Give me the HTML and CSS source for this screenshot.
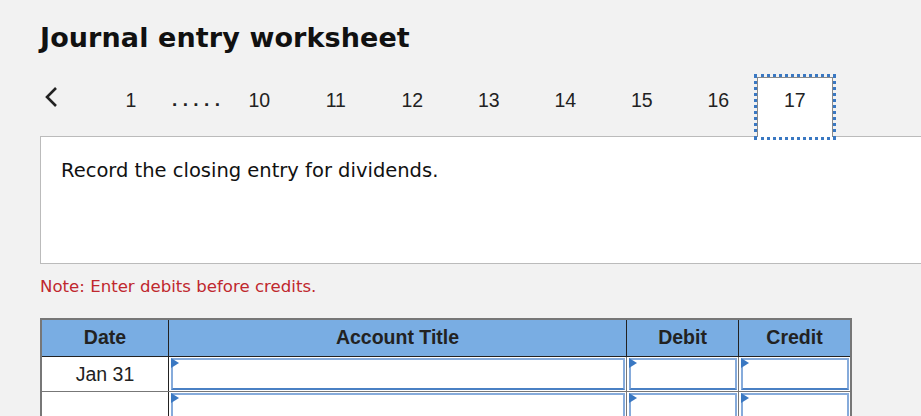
FILE: index.html
```html
<!DOCTYPE html>
<html>
<head>
<meta charset="utf-8">
<link rel="stylesheet" href="styles.css">
</head>
<body>
<div class="page">
  <h1 class="title">Journal entry worksheet</h1>
  <nav class="pager">
    <span class="prev"><svg width="14" height="22" viewBox="0 0 14 22"><polyline points="12,1 3,10 12,19" fill="none" stroke="#222" stroke-width="2.6"/></svg></span>
    <span class="pg first">1</span>
    <span class="pg dots">.....</span>
    <span class="pg">10</span>
    <span class="pg">11</span>
    <span class="pg">12</span>
    <span class="pg">13</span>
    <span class="pg">14</span>
    <span class="pg">15</span>
    <span class="pg">16</span>
    <span class="pg active">17</span>
  </nav>
  <div class="panel">
    <p class="prompt">Record the closing entry for dividends.</p>
  </div>
  <p class="note">Note: Enter debits before credits.</p>
  <table class="journal">
    <thead>
      <tr>
        <th class="c-date">Date</th>
        <th class="c-acct">Account Title</th>
        <th class="c-num">Debit</th>
        <th class="c-num2">Credit</th>
      </tr>
    </thead>
    <tbody>
      <tr>
        <td class="date">Jan 31</td>
        <td class="inp"><div class="field"></div></td>
        <td class="inp"><div class="field"></div></td>
        <td class="inp"><div class="field"></div></td>
      </tr>
      <tr>
        <td class="date"></td>
        <td class="inp"><div class="field"></div></td>
        <td class="inp"><div class="field"></div></td>
        <td class="inp"><div class="field"></div></td>
      </tr>
    </tbody>
  </table>
</div>
</body>
</html>
```
FILE: styles.css
```css
html, body {
  margin: 0;
  padding: 0;
  background: #f2f2f2;
  overflow: hidden;
}
.page {
  padding-left: 40px;
  width: 881px;
}
.title {
  margin: 0;
  padding-top: 21px;
  font-family: "DejaVu Sans", Verdana, sans-serif;
  font-weight: bold;
  font-size: 27px;
  line-height: 34px;
  color: #111;
  letter-spacing: 0.1px;
}
.pager {
  display: flex;
  align-items: flex-start;
  margin-top: 22px;
  height: 59px;
  font-family: "Liberation Sans", Arial, sans-serif;
  font-size: 19.5px;
  color: #222;
}
.prev {
  width: 61px;
  padding-top: 10px;
  padding-left: 4px;
  box-sizing: border-box;
}
.prev svg { display: block; }
.pg {
  width: 76.5px;
  text-align: center;
  padding-top: 12px;
  line-height: 22px;
  box-sizing: border-box;
  height: 59px;
}
.pg.first { width: 60px; }
.pg.dots {
  width: 60px;
  font-weight: bold;
  letter-spacing: 5.4px;
  padding-left: 11px;
  text-align: left;
  font-size: 19px;
}
.pg.active {
  position: relative;
  background: #fff;
  border: 1px solid #8a8a8a;
  border-bottom: none;
  padding-top: 11px;
  outline: 3px dotted #3a78c2;
  outline-offset: 0px;
  z-index: 2;
  height: 60px;
  margin-bottom: -1px;
}
.panel {
  background: #fff;
  border: 1px solid #bbb;
  border-right: none;
  height: 126px;
}
.prompt {
  margin: 0;
  padding: 22px 0 0 20px;
  font-family: "DejaVu Sans", Verdana, sans-serif;
  font-size: 19.5px;
  color: #111;
  line-height: 24px;
}
.note {
  margin: 0;
  padding-top: 13px;
  height: 41px;
  box-sizing: border-box;
  font-family: "DejaVu Sans", Verdana, sans-serif;
  font-size: 16.6px;
  line-height: 20px;
  color: #c0282e;
}
.journal {
  margin-top: 13px;
  border-collapse: collapse;
  font-family: "Liberation Sans", Arial, sans-serif;
  font-size: 19.5px;
  color: #222;
  border: 2px solid #777;
}
.journal th {
  background: #79ade3;
  font-weight: bold;
  height: 34px;
  padding: 0 0 2px 0;
  border: 1px solid #222;
  border-top: none;
}
.c-date { width: 126px; }
.c-acct { width: 457px; }
.c-num { width: 111px; }
.c-num2 { width: 111px; }
.journal td {
  background: #fff;
  padding: 0;
  height: 32px;
  border: 1px solid #777;
  border-top: none;
}
.journal td.date {
  text-align: center;
  border-right: 1px solid #222;
}
.journal td.inp {
  padding: 1px 1px 1px 2px;
  border-left: 1px solid #222;
}
.field {
  position: relative;
  height: 32px;
  box-sizing: border-box;
  border: 2px solid #86abdb;
  border-bottom-color: #4a80c4;
  background: #fff;
}
.field::before {
  content: "";
  position: absolute;
  left: -2px;
  top: -2px;
  width: 0;
  height: 0;
  border-top: 5px solid transparent;
  border-bottom: 5px solid transparent;
  border-left: 8px solid #3a78c2;
}
```
